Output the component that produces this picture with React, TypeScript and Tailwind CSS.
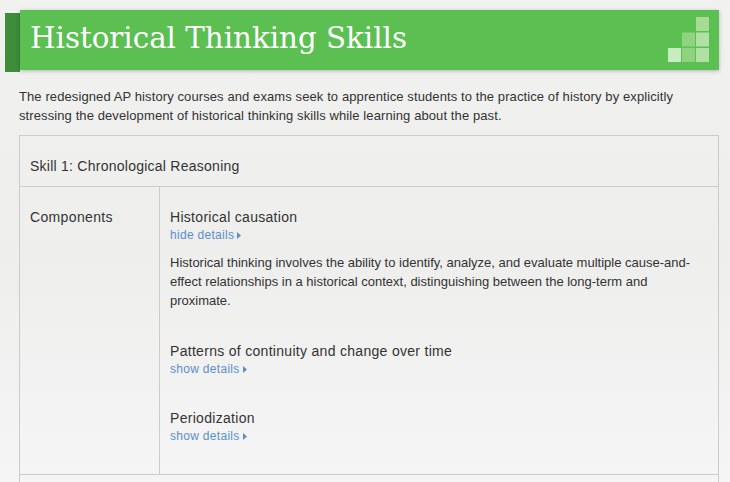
import React from "react";

function Squares() {
  return (
    <svg width="42" height="45" viewBox="0 0 42 45" className="block">
      <rect x="28" y="0" width="13" height="14" fill="#a5db95" />
      <rect x="14" y="15.5" width="13" height="14" fill="#8fd37f" />
      <rect x="28" y="15.5" width="13" height="14" fill="#b0e0a3" />
      <rect x="0" y="31" width="13" height="14" fill="#c9ebc1" />
      <rect x="14" y="31" width="13" height="14" fill="#8fd37f" />
      <rect x="28" y="31" width="13" height="14" fill="#b0e0a3" />
    </svg>
  );
}

function DetailsLink({ label }: { label: string }) {
  return (
    <div className="text-[12px] leading-[16px] tracking-[0.3px] text-[#5b8fcb] flex items-center gap-[3px]">
      <span>{label}</span>
      <svg width="4" height="7" viewBox="0 0 4 7" className="mt-[1px]">
        <path d="M0 0 L4 3.5 L0 7 Z" fill="#5b8fcb" />
      </svg>
    </div>
  );
}

function Component({
  title,
  open,
  children,
}: {
  title: string;
  open?: boolean;
  children?: React.ReactNode;
}) {
  return (
    <div>
      <div className="text-[14px] leading-[20px] tracking-[0.3px] text-[#333]">{title}</div>
      <DetailsLink label={open ? "hide details" : "show details"} />
      {open && (
        <p className="mt-[10px] text-[13px] leading-[19px] text-[#333]">{children}</p>
      )}
    </div>
  );
}

export default function App() {
  return (
    <div className="min-h-screen bg-gradient-to-b from-[#f1f1f0] via-[#eeeeed] to-[#f6f6f6] font-['Liberation_Sans',Arial,sans-serif] pt-[10px]">
      <header className="flex ml-[5px] mr-[11px]">
        <div className="w-[15px] h-[59px] mt-[3px] bg-[#3f8c3b]" />
        <div className="flex-1 h-[60px] bg-[#5cbf52] shadow-[0_1px_4px_rgba(0,0,0,0.25)] flex items-center justify-between pl-[10px] pr-[9px]">
          <h1 className="font-['DejaVu_Serif',serif] text-[29.3px] text-white leading-none mb-[2px]">
            Historical Thinking Skills
          </h1>
          <div className="self-end mb-[8px]">
            <Squares />
          </div>
        </div>
      </header>

      <p className="mt-[15px] px-[19px] text-[13px] leading-[19px] tracking-[0.1px] text-[#333]">
        The redesigned AP history courses and exams seek to apprentice students to the practice of
        history by explicitly stressing the development of historical thinking skills while learning
        about the past.
      </p>

      <div className="mt-[10px] ml-[19px] w-[700px] border border-[#cccccc] text-[#333]">
        <div className="px-[10px] pt-[20px] pb-[10px] text-[14px] leading-[20px] tracking-[0.25px] border-b border-[#cccccc]">
          Skill 1: Chronological Reasoning
        </div>
        <div className="flex border-b border-[#cccccc]">
          <div className="w-[140px] shrink-0 border-r border-[#cccccc] pl-[10px] pt-[20px] text-[14px] leading-[20px] tracking-[0.35px]">
            Components
          </div>
          <div className="flex-1 pl-[10px] pr-[14px] pt-[20px] pb-[30px] flex flex-col gap-[31px]">
            <Component title="Historical causation" open>
              Historical thinking involves the ability to identify, analyze, and evaluate multiple
              cause-and-effect relationships in a historical context, distinguishing between the
              long-term and proximate.
            </Component>
            <Component title="Patterns of continuity and change over time" />
            <Component title="Periodization" />
          </div>
        </div>
        <div className="h-[40px]" />
      </div>
    </div>
  );
}
